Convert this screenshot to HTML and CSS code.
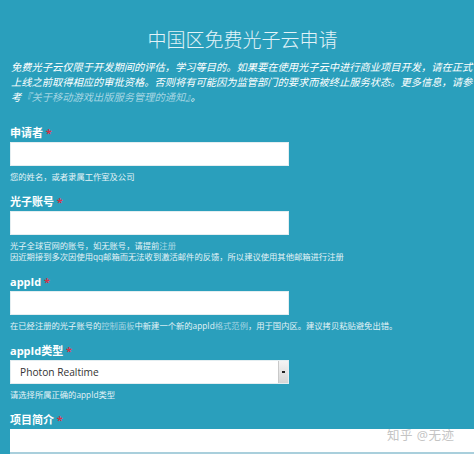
FILE: index.html
```html
<!DOCTYPE html>
<html lang="zh-CN">
<head>
<meta charset="utf-8">
<title>中国区免费光子云申请</title>
<link rel="stylesheet" href="styles.css">
</head>
<body>
<div class="page">
  <h1 class="title">中国区免费光子云申请</h1>
  <p class="intro">免费光子云仅限于开发期间的评估，学习等目的。如果要在使用光子云中进行商业项目开发，请在正式上线之前取得相应的审批资格。否则将有可能因为监管部门的要求而被终止服务状态。更多信息，请参考<a class="link">『关于移动游戏出版服务管理的通知』</a>。</p>

  <div class="field">
    <label class="label">申请者 <span class="req">*</span></label>
    <div class="input"></div>
    <div class="help">您的姓名，或者隶属工作室及公司</div>
  </div>

  <div class="field">
    <label class="label">光子账号 <span class="req">*</span></label>
    <div class="input"></div>
    <div class="help">光子全球官网的账号，如无账号，请提前<a class="link">注册</a><br>因近期接到多次因使用qq邮箱而无法收到激活邮件的反馈，所以建议使用其他邮箱进行注册</div>
  </div>

  <div class="field">
    <label class="label">appId <span class="req">*</span></label>
    <div class="input"></div>
    <div class="help">在已经注册的光子账号的<a class="link">控制面板</a>中新建一个新的appId<a class="link">格式范例</a>，用于国内区。建议拷贝粘贴避免出错。</div>
  </div>

  <div class="field">
    <label class="label">appId类型 <span class="req">*</span></label>
    <div class="input select">
      <span class="select-text">Photon Realtime</span>
      <span class="select-btn"><span class="arrow"></span></span>
    </div>
    <div class="help">请选择所属正确的appId类型</div>
  </div>

  <div class="field last">
    <label class="label">项目简介 <span class="req">*</span></label>
    <div class="textarea"></div>
  </div>

  <div class="watermark">知乎 @无迹</div>
</div>
</body>
</html>
```

FILE: styles.css
```css
html, body {
  margin: 0;
  padding: 0;
}
body {
  background: #2a9fbc;
  width: 474px;
  height: 454px;
  overflow: hidden;
  font-family: "Open Sans", "Noto Sans CJK SC", sans-serif;
  color: #ffffff;
}
.page {
  position: relative;
  padding: 28px 0 0 10px;
}
.title {
  margin: 0;
  padding-left: 1px;
  font-size: 19px;
  line-height: 24px;
  font-weight: 300;
  text-align: center;
  color: #e3f3f8;
}
.intro {
  margin: 8px -4px 0 1px;
  font-size: 10.25px;
  line-height: 15px;
  font-style: italic;
  color: #ffffff;
}
.link {
  color: #a6d6e3;
  text-decoration: none;
}
.field {
  margin-top: 20px;
}
.field + .field {
  margin-top: 12px;
}
.label {
  display: block;
  font-size: 11px;
  line-height: 15px;
  font-weight: 700;
  color: #ffffff;
}
.req {
  color: #d2344a;
}
.input {
  margin-top: 2px;
  width: 279px;
  height: 24px;
  box-sizing: border-box;
  background: #ffffff;
  border: 1px solid #e4eef1;
}
.select {
  display: flex;
  align-items: center;
  justify-content: space-between;
  padding-left: 9px;
}
.select-text {
  font-size: 10.2px;
  color: #333333;
}
.select-btn {
  width: 10px;
  height: 22px;
  box-sizing: border-box;
  background: linear-gradient(#f4f4f4, #d6d6d6);
  border-left: 1px solid #c9c9c9;
  display: flex;
  align-items: center;
  justify-content: center;
}
.arrow {
  width: 3px;
  height: 2px;
  background: #222222;
}
.help {
  margin-top: 5px;
  font-size: 8.3px;
  line-height: 11px;
  color: #e4f3f7;
}
.textarea {
  margin-top: 2px;
  height: 26px;
  box-sizing: border-box;
  background: #ffffff;
  border-bottom: 3px solid #a9cfdc;
}
.watermark {
  position: absolute;
  left: 387px;
  top: 428px;
  font-size: 12.5px;
  line-height: 16px;
  color: #c4c4c4;
  letter-spacing: 0.5px;
}
```
